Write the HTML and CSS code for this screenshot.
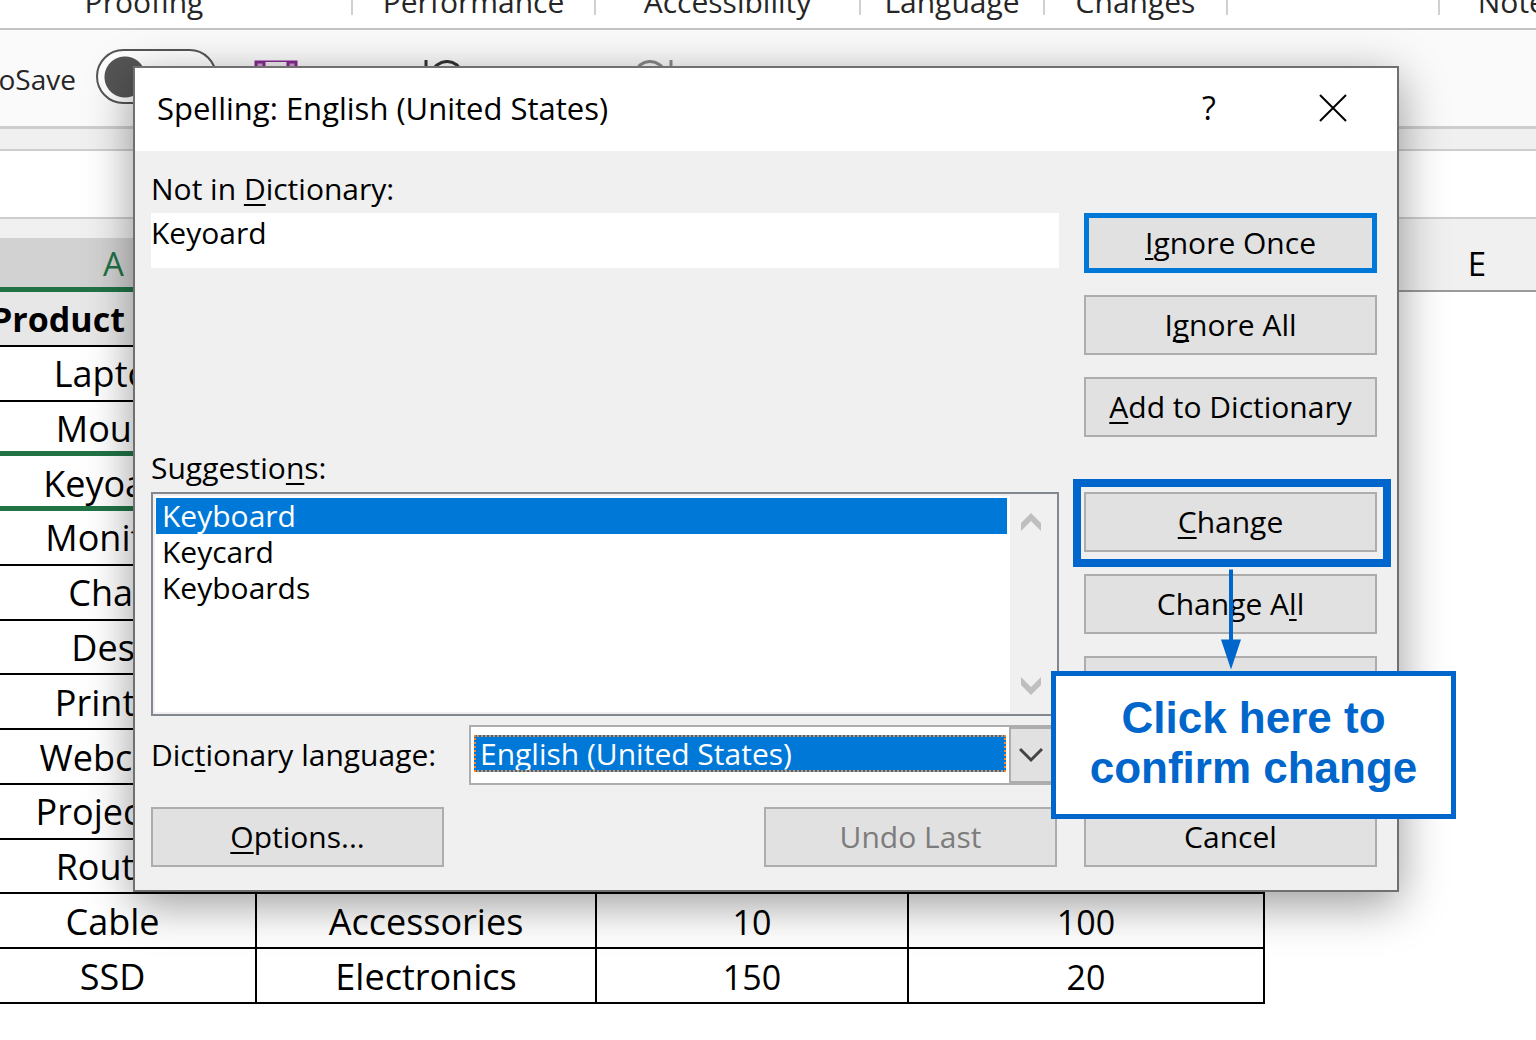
FILE: index.html
```html
<!DOCTYPE html>
<html lang="en">
<head>
<meta charset="utf-8">
<title>Spelling check</title>
<link rel="stylesheet" href="styles.css">
</head>
<body>
<div class="app">
  <div class="ribbon">
    <span class="group group-proofing">Proofing</span>
    <span class="group group-performance">Performance</span>
    <span class="group group-accessibility">Accessibility</span>
    <span class="group group-language">Language</span>
    <span class="group group-changes">Changes</span>
    <span class="group group-blank"></span>
    <span class="group group-notes">Notes</span>
  </div>

  <div class="quickbar">
    <label class="autosave" for="autosave">AutoSave</label>
    <input class="toggle" type="checkbox" role="switch" id="autosave">
    <svg class="icon-save" viewBox="0 0 44 44" fill="#c9a0d0" stroke="#86298f" stroke-width="3"><path d="M2 2h40v40H2z"/><path d="M10 2v18h24V2" fill="#eee"/></svg>
    <svg class="icon-undo" viewBox="0 0 44 44" fill="none" stroke="#333" stroke-width="3"><path d="M3 0v16h16M3 16L14 5Q24 -2 34 5Q42 14 34 22L16 40"/></svg>
    <svg class="icon-redo" viewBox="0 0 44 44" fill="none" stroke="#888" stroke-width="3"><path d="M36 0v16H20M36 16L25 5Q15 -2 5 5Q-3 14 5 22L23 40"/></svg>
  </div>

  <div class="strip"></div>
  <div class="formula"></div>

  <table class="sheet">
    <colgroup><col class="col-a"><col class="col-b"><col class="col-c"><col class="col-d"><col class="col-e"></colgroup>
    <thead>
      <tr><th class="active">A</th><th></th><th></th><th></th><th>E</th></tr>
    </thead>
    <tbody>
      <tr class="titles"><td>Product</td><td></td><td></td><td></td></tr>
      <tr><td>Laptop</td><td></td><td></td><td></td></tr>
      <tr class="picked"><td>Mouse</td><td></td><td></td><td></td></tr>
      <tr class="picked"><td>Keyoard</td><td></td><td></td><td></td></tr>
      <tr><td>Monitor</td><td></td><td></td><td></td></tr>
      <tr><td>Chair</td><td></td><td></td><td></td></tr>
      <tr><td>Desk</td><td></td><td></td><td></td></tr>
      <tr><td>Printer</td><td></td><td></td><td></td></tr>
      <tr><td>Webcam</td><td></td><td></td><td></td></tr>
      <tr><td>Projector</td><td></td><td></td><td></td></tr>
      <tr><td>Router</td><td></td><td></td><td></td></tr>
      <tr><td>Cable</td><td>Accessories</td><td class="num">10</td><td class="num">100</td></tr>
      <tr><td>SSD</td><td>Electronics</td><td class="num">150</td><td class="num">20</td></tr>
    </tbody>
  </table>

  <section class="dialog" role="dialog" aria-labelledby="dialog-title">
    <header class="titlebar">
      <h1 id="dialog-title">Spelling: English (United States)</h1>
      <button class="title-button" type="button" aria-label="Help">?</button>
      <button class="title-button" type="button" aria-label="Close"><svg class="icon-close" viewBox="0 0 28 28" fill="none" stroke="#000" stroke-width="2"><path d="M1 1l26 26M27 1L1 27"/></svg></button>
    </header>
    <form class="form">
      <label class="caption" for="word">Not in <u>D</u>ictionary:</label>
      <input class="word" id="word" type="text" value="Keyoard">
      <div class="stack stack-ignore">
        <button class="btn btn-default" type="button"><u>I</u>gnore Once</button>
        <button class="btn" type="button">I<u>g</u>nore All</button>
        <button class="btn" type="button"><u>A</u>dd to Dictionary</button>
      </div>
      <span class="caption caption-list" id="suggestions">Suggestio<u>n</u>s:</span>
      <div class="listbox">
        <ul class="options" role="listbox" aria-labelledby="suggestions">
          <li role="option" aria-selected="true">Keyboard</li>
          <li role="option" aria-selected="false">Keycard</li>
          <li role="option" aria-selected="false">Keyboards</li>
        </ul>
        <div class="scrollbar">
          <svg class="icon-scroll" viewBox="0 0 20 18" fill="#bfbfbf"><path d="M10 0l10 10v8L10 8 0 18v-8z"/></svg>
          <svg class="icon-scroll" viewBox="0 0 20 18" fill="#bfbfbf"><path d="M10 18L20 8V0L10 10 0 0v8z"/></svg>
        </div>
      </div>
      <div class="stack stack-change">
        <button class="btn" type="button"><u>C</u>hange</button>
        <button class="btn" type="button">Change A<u>l</u>l</button>
        <button class="btn" type="button" aria-label="AutoCorrect"></button>
      </div>
      <div class="language">
        <label for="language">Dic<u>t</u>ionary language:</label>
        <div class="combo">
          <select id="language"><option>English (United States)</option></select>
          <span class="combo-arrow"><svg class="icon-arrow" viewBox="0 0 24 16" fill="none" stroke="#444" stroke-width="3"><path d="M1 2l11 11L23 2"/></svg></span>
        </div>
      </div>
      <div class="footer">
        <button class="btn" type="button"><u>O</u>ptions...</button>
        <button class="btn" type="button" disabled>Undo Last</button>
      </div>
      <button class="btn" type="button">Cancel</button>
    </form>

    <div class="marker"></div>
    <svg class="arrow" viewBox="0 0 20 100" fill="#0066cc"><path d="M8 0h4v70h8L10 100 0 70h8z"/></svg>
    <p class="callout">Click here to<br>confirm change</p>
  </section>
</div>
</body>
</html>
```
FILE: styles.css
```css
* { box-sizing: border-box; }
body {
  margin: 0;
  background: #fff;
  color: #000;
  font-family: "Open Sans", "Noto Sans", sans-serif;
  font-size: 30px;
}
button, input, select { font: inherit; color: inherit; margin: 0; border-radius: 0; }
u { text-decoration-thickness: 2px; text-underline-offset: 4px; text-decoration-skip-ink: none; }
.app { position: relative; min-height: 100vh; overflow: hidden; }

.ribbon {
  display: flex;
  height: 30px;
  padding-bottom: 14px;
  align-items: flex-end;
  overflow: hidden;
  border-bottom: 2px solid #c4c4c4;
  font-size: 30px;
  color: #262626;
}
.group {
  flex: none;
  display: flex;
  justify-content: center;
  height: 40px;
  line-height: 40px;
  margin-bottom: -8px;
  border-image: linear-gradient(#d0d0d0 32px, transparent 32px) 1;
  border-right: 2px solid;
}
.group-proofing { width: 416px; margin-left: -63px; }
.group-performance { width: 243px; }
.group-accessibility { width: 265px; }
.group-language { width: 184px; }
.group-changes { width: 183px; }
.group-blank { width: 212px; }
.group-notes { width: 160px; }

.quickbar {
  display: flex;
  height: 99px;
  padding-top: 19px;
  background: #fafafa;
  border-bottom: 3px solid #cecece;
  font-size: 28px;
  color: #262626;
}
.quickbar svg { flex: none; width: 44px; height: 44px; margin-top: 11px; }
.autosave {
  display: flex;
  justify-content: flex-end;
  flex: none;
  width: 76px;
  line-height: 60px;
  overflow: hidden;
}
.toggle {
  appearance: none;
  flex: none;
  width: 121px;
  height: 55px;
  margin-left: 20px;
  border: 2px solid #555;
  border-radius: 28px;
  background: radial-gradient(circle at 27px 26px, #555 20px, #fff 21px);
}
.quickbar .icon-save { margin-left: 37px; }
.quickbar .icon-undo { margin-left: 125px; }
.quickbar .icon-redo { margin-left: 168px; }

.strip { height: 22px; background: #f0f0f0; border-bottom: 2px solid #cecece; }
.formula { height: 68px; border-bottom: 2px solid #cecece; }

.sheet {
  table-layout: fixed;
  width: 1719px;
  height: 785px;
  margin-left: -30px;
  border-spacing: 0;
  font-size: 36px;
  line-height: 40px;
  text-align: center;
}
.col-a { width: 287px; }
.col-b { width: 340px; }
.col-c { width: 312px; }
.col-d { width: 356px; }
.col-e { width: 424px; }
.sheet th {
  height: 73px;
  padding: 18px 0 0;
  border-bottom: 2px solid #9a9a9a;
  background: #f0f0f0;
  font-size: 33px;
  font-weight: 400;
}
.sheet th.active {
  border-color: #217346;
  box-shadow: inset 0 -3px #217346;
  background: linear-gradient(#f0f0f0 19px, #d2d2d2 19px);
  color: #217346;
}
.sheet td { padding: 2px 0 0; border-right: 2px solid #000; border-bottom: 2px solid #000; }
.sheet .titles td { padding-left: 21px; background: #e7e7e7; font-size: 34px; font-weight: 700; text-align: left; }
.picked td:first-child { border-bottom-color: #217346; box-shadow: inset 0 -3px #217346; }
.sheet .num { font-size: 34px; }

.dialog {
  position: absolute;
  left: 133px;
  top: 66px;
  width: 1266px;
  border: 2px solid #707070;
  background: #f0f0f0;
  box-shadow: 0 12px 44px rgba(0, 0, 0, .4);
}
.titlebar {
  display: flex;
  align-items: center;
  height: 83px;
  padding: 0 2px 4px 22px;
  background: #fff;
}
.titlebar h1 { flex: 1; margin: 0; font-size: 31px; font-weight: 400; }
.title-button { width: 124px; padding: 0; border: 0; background: none; font-size: 32px; }
.icon-close { display: block; width: 28px; height: 28px; margin: auto; }

.form {
  display: grid;
  grid-template-columns: 1fr 293px;
  grid-template-rows: 62px 224px 55px 224px 69px 82px;
  column-gap: 25px;
  padding: 0 20px 23px 16px;
  line-height: 36px;
}
.caption { grid-column: 1; grid-row: 1; align-self: end; padding-bottom: 6px; }
.caption-list { grid-row: 3; }
.word {
  grid-column: 1;
  grid-row: 2;
  align-self: start;
  width: 100%;
  height: 55px;
  padding: 0 0 16px;
  border: 0;
  background: #fff;
}
.stack { grid-column: 2; display: flex; flex-direction: column; gap: 22px; }
.stack-ignore { grid-row: 2; }
.stack-change { grid-row: 4; }
.btn {
  width: 293px;
  height: 60px;
  padding: 0;
  align-self: end;
  border: 2px solid #adadad;
  background: #e1e1e1;
}
.btn-default { border: 5px solid #0078d7; }
.btn:disabled { color: #7c7c7c; }

.listbox {
  grid-column: 1;
  grid-row: 4;
  display: flex;
  padding: 2px;
  border: 2px solid #828790;
}
.options { flex: 1; margin: 0; padding: 2px 3px 0 1px; list-style: none; background: #fff; }
.options li { padding-left: 6px; }
.options li[aria-selected="true"] { background: #0078d7; color: #fff; }
.scrollbar {
  display: flex;
  flex-direction: column;
  justify-content: space-between;
  align-items: center;
  width: 45px;
  padding: 17px 4px 17px 0;
}
.icon-scroll { width: 20px; height: 18px; }

.language { grid-column: 1; display: flex; justify-content: space-between; align-items: flex-end; line-height: 60px; }
.combo {
  display: flex;
  width: 590px;
  height: 60px;
  border: 2px solid #adadad;
  background: #fff;
}
.combo select {
  appearance: none;
  flex: 1;
  height: 37px;
  margin: 8px 3px 0;
  padding: 0 4px;
  border: 2px dotted #ff8728;
  outline: 0;
  background: #0078d7;
  color: #fff;
  line-height: 32px;
}
.combo-arrow {
  display: flex;
  align-items: center;
  justify-content: center;
  width: 48px;
  border: 2px solid #adadad;
  background: #e1e1e1;
}
.icon-arrow { width: 24px; height: 16px; margin-right: 4px; }
.footer { grid-column: 1; display: flex; justify-content: space-between; padding-right: 2px; }

.marker {
  position: absolute;
  top: 411px;
  right: 6px;
  width: 318px;
  height: 88px;
  border: 8px solid #0066cc;
}
.arrow { position: absolute; top: 501px; right: 156px; width: 20px; height: 101px; }
.callout {
  position: absolute;
  top: 603px;
  right: -59px;
  width: 405px;
  height: 148px;
  margin: 0;
  padding: 17px 0 0;
  border: 5px solid #0066cc;
  background: #fff;
  color: #0066cc;
  font: 700 44px/50px "Liberation Sans", Arial, sans-serif;
  text-align: center;
}
```
